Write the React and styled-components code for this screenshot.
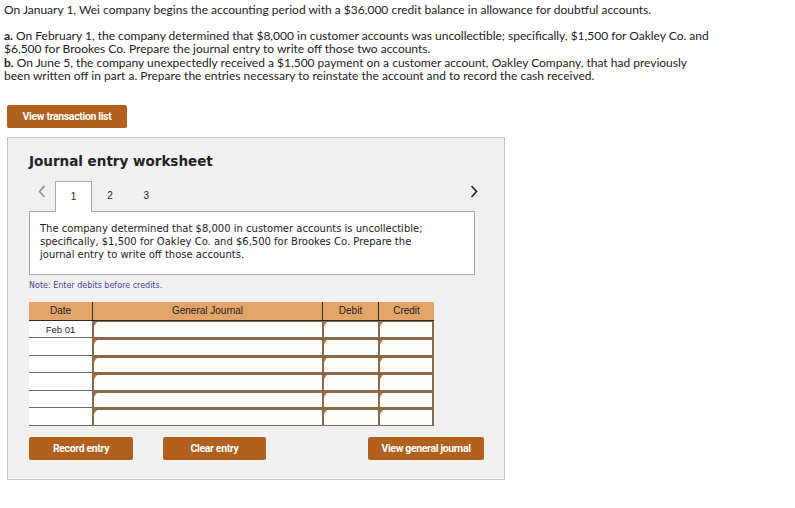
import React from 'react';
import styled, { createGlobalStyle } from 'styled-components';

const Global = createGlobalStyle`
  body {
    margin: 0;
    background: #fff;
    font-family: Lato, "Open Sans", sans-serif;
    color: #222;
  }
`;

const Page = styled.div`
  width: 795px;
  height: 508px;
  padding: 3px 0 0 4px;
  box-sizing: border-box;
`;

const Intro = styled.p`
  margin: 0 0 ${p => p.$gap || 0}px;
  font-size: 12px;
  line-height: 13.6px;
  width: 707px;
  b { font-weight: 700; }
`;

const Btn = styled.button`
  display: block;
  width: ${p => p.$w}px;
  height: 23px;
  margin-left: ${p => p.$ml || 0}px;
  border: none;
  border-radius: 2px;
  background: #b1601d;
  color: #fff;
  font-family: Roboto, "Liberation Sans", sans-serif;
  font-weight: 700;
  font-size: 10.5px;
  letter-spacing: -0.35px;
  padding: 0;
`;

const Spacer = styled.div`
  height: ${p => p.$h}px;
`;

const Panel = styled.div`
  margin: 9px 0 0 3px;
  width: 498px;
  height: 343px;
  box-sizing: border-box;
  border: 1px solid #c6c6c6;
  background: #f1f1f1;
  padding: 15px 0 0 20px;
  font-family: "DejaVu Sans", Verdana, sans-serif;
`;

const Title = styled.h2`
  margin: 0 0 12px 1px;
  font-size: 13.5px;
  font-weight: 700;
  color: #222;
`;

const Tabs = styled.div`
  display: flex;
  align-items: flex-end;
  height: 30px;
  width: 456px;
  position: relative;
  z-index: 1;
`;

const Chevron = styled.span`
  width: ${p => p.$w}px;
  align-self: flex-start;
  display: flex;
  justify-content: center;
  padding-top: 4px;
  margin-left: ${p => p.$ml || 0}px;
`;

const Tab = styled.div`
  width: 37px;
  height: 30px;
  box-sizing: border-box;
  display: flex;
  align-items: center;
  justify-content: center;
  font-size: 10px;
  color: #222;
  font-family: "Liberation Sans", Arial, sans-serif;
  ${p => p.$active && `
    background: #fff;
    border: 1px solid #a8a8a8;
    border-bottom: none;
    height: 31px;
    margin-bottom: -1px;
  `}
`;

const Desc = styled.div`
  width: 446px;
  height: 64px;
  box-sizing: border-box;
  border: 1px solid #a8a8a8;
  background: #fff;
  margin-left: 1px;
  padding: 10px 50px 0 10px;
  font-size: 10px;
  line-height: 13px;
  color: #222;
`;

const Note = styled.div`
  margin: 6px 0 0 1px;
  font-size: 8px;
  color: #46469a;
`;

const Grid = styled.div`
  display: grid;
  grid-template-columns: 63px 230px 56px 56px;
  width: 405px;
  margin: 12px 0 0 1px;
  font-family: "Liberation Sans", Arial, sans-serif;
`;

const Head = styled.div`
  height: 18px;
  background: #e2a468;
  border-bottom: 1.5px solid #2a2a2a;
  border-left: ${p => p.$first ? 'none' : '1px solid #2a2a2a'};
  display: flex;
  align-items: center;
  justify-content: center;
  font-size: 10px;
  color: #222;
`;

const DateCell = styled.div`
  height: 17.5px;
  box-sizing: border-box;
  background: #fff;
  border-bottom: 1px solid #666;
  display: flex;
  align-items: center;
  justify-content: center;
  font-size: 9.5px;
  color: #222;
`;

const Input = styled.div`
  height: 17.5px;
  box-sizing: border-box;
  background: #fffefc;
  border: 2px solid #876a4c;
  border-right-width: ${p => p.$last ? 2 : 0}px;
  border-top-width: ${p => p.$top ? 1 : 2}px;
  border-bottom-width: 1px;
  position: relative;
  &::before {
    content: '';
    position: absolute;
    left: 0;
    top: 0;
    border-top: 4px solid #d07a28;
    border-right: 3px solid transparent;
  }
`;

const Actions = styled.div`
  display: flex;
  margin: 11px 0 0 1px;
`;

const rows = ['Feb 01', '', '', '', '', ''];

const Arrow = ({ dir, color }) => (
  <svg width="8" height="13" viewBox="0 0 8 13">
    <polyline
      points={dir === 'left' ? '6.5,1 1.5,6.5 6.5,12' : '1.5,1 6.5,6.5 1.5,12'}
      fill="none"
      stroke={color}
      strokeWidth="1.6"
    />
  </svg>
);

export default function App() {
  return (
    <Page>
      <Global />
      <Intro $gap={12}>On January 1, Wei company begins the accounting period with a $36,000 credit balance in allowance for doubtful accounts.</Intro>
      <Intro>
        <b>a.</b> On February 1, the company determined that $8,000 in customer accounts was uncollectible; specifically, $1,500 for Oakley Co. and $6,500 for Brookes Co. Prepare the journal entry to write off those two accounts.
        <br />
        <b>b.</b> On June 5, the company unexpectedly received a $1,500 payment on a customer account, Oakley Company, that had previously been written off in part a. Prepare the entries necessary to reinstate the account and to record the cash received.
      </Intro>
      <Spacer $h={22} />
      <Btn $w={120} $ml={3}>View transaction list</Btn>
      <Panel>
        <Title>Journal entry worksheet</Title>
        <Tabs>
          <Chevron $w={28}><Arrow dir="left" color="#8c8c8c" /></Chevron>
          <Tab $active>1</Tab>
          <Tab>2</Tab>
          <Tab>3</Tab>
          <Chevron $w={20} $ml={300}><Arrow dir="right" color="#222" /></Chevron>
        </Tabs>
        <Desc>
          The company determined that $8,000 in customer accounts is uncollectible; specifically, $1,500 for Oakley Co. and $6,500 for Brookes Co. Prepare the journal entry to write off those accounts.
        </Desc>
        <Note>Note: Enter debits before credits.</Note>
        <Grid>
          <Head $first>Date</Head>
          <Head>General Journal</Head>
          <Head>Debit</Head>
          <Head>Credit</Head>
          {rows.map((d, i) => (
            <React.Fragment key={i}>
              <DateCell>{d}</DateCell>
              <Input $top={i === 0} />
              <Input $top={i === 0} />
              <Input $top={i === 0} $last />
            </React.Fragment>
          ))}
        </Grid>
        <Actions>
          <Btn $w={104}>Record entry</Btn>
          <Btn $w={103} $ml={30}>Clear entry</Btn>
          <Btn $w={116} $ml={102}>View general journal</Btn>
        </Actions>
      </Panel>
    </Page>
  );
}
